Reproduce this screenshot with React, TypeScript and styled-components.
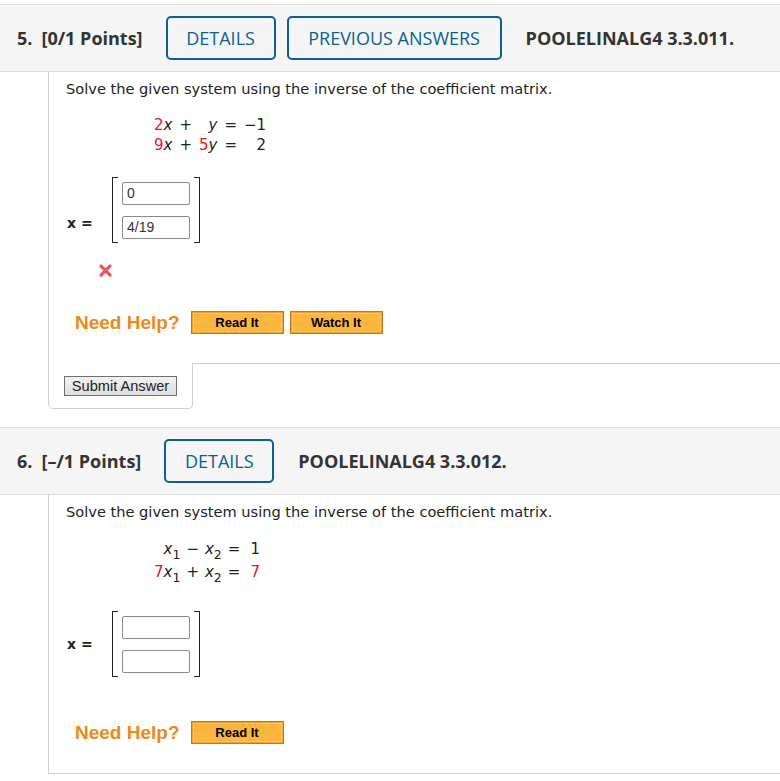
import React from "react";
import styled, { createGlobalStyle } from "styled-components";

const Global = createGlobalStyle`
  html, body { margin: 0; padding: 0; background: #fff; }
  body { padding-top: 4px; font-family: "DejaVu Sans", Verdana, sans-serif; }
`;

const Header = styled.div`
  display: flex;
  align-items: center;
  height: 66px;
  background: #f5f5f5;
  border-top: 1px solid #dcdcdc;
  border-bottom: 1px solid #dcdcdc;
  padding-left: 17px;
  font-family: "Open Sans", sans-serif;
  color: #333;
`;

const Points = styled.div`
  font-weight: 700;
  font-size: 18px;
  display: flex;
  gap: 9px;
  margin-right: 23px;
`;

const OutlineBtn = styled.div<{ $w: number }>`
  box-sizing: border-box;
  width: ${(p) => p.$w}px;
  height: 44px;
  border: 2px solid #0c5f96;
  border-radius: 5px;
  display: flex;
  align-items: center;
  justify-content: center;
  color: #0c5f96;
  font-size: 18px;
  margin-right: 11px;
`;

const Title = styled.div`
  font-weight: 700;
  font-size: 18px;
  margin-left: 13px;
`;

const Body = styled.div`
  margin-left: 48px;
  border-left: 1px solid #cfcfcf;
  padding: 8px 0 0 17px;
  color: #222;
  font-size: 14.6px;
`;

const Prompt = styled.div`
  line-height: 18px;
`;

const Eqs = styled.div<{ $lh: number; $top: number; $left: number; $gap: number }>`
  display: grid;
  grid-template-columns: auto auto auto auto auto;
  column-gap: ${(p) => p.$gap}px;
  justify-content: start;
  margin: ${(p) => p.$top}px 0 0 ${(p) => p.$left}px;
  line-height: ${(p) => p.$lh}px;
  font-size: 15px;
`;

const Cell = styled.span<{ $r?: boolean; $pad?: number }>`
  text-align: ${(p) => (p.$r ? "right" : "left")};
  white-space: nowrap;
  padding-left: ${(p) => p.$pad || 0}px;
`;

const Red = styled.span`
  color: #e8141e;
`;

const Var = styled.i`
  font-style: italic;
`;

const Sub = styled.sub`
  font-size: 12.5px;
  vertical-align: -5px;
  line-height: 0;
`;

const MatrixRow = styled.div<{ $top: number }>`
  display: flex;
  align-items: center;
  margin-top: ${(p) => p.$top}px;
`;

const XLabel = styled.span<{ $off: number }>`
  font-weight: 700;
  font-size: 14px;
  width: 45px;
  padding-left: 1px;
  position: relative;
  top: ${(p) => p.$off}px;
`;

const Bracket = styled.div`
  display: flex;
  flex-direction: column;
  gap: 11px;
  padding: 5px 9px 4px 9px;
  border-left: 1px solid #222;
  border-right: 1px solid #222;
  position: relative;
  &::before, &::after {
    content: "";
    position: absolute;
    top: 0;
    bottom: 0;
    width: 5px;
    border-top: 1px solid #222;
    border-bottom: 1px solid #222;
  }
  &::before { left: 0; }
  &::after { right: 0; }
`;

const Input = styled.div`
  box-sizing: border-box;
  width: 68px;
  height: 23px;
  border: 1px solid #8a8a8a;
  border-radius: 2px;
  font-family: "Liberation Sans", Arial, sans-serif;
  font-size: 14px;
  color: #333;
  padding: 2px 0 0 4px;
  background: #fff;
`;

const Wrong = styled.div`
  margin: 20px 0 0 32px;
  height: 16px;
`;

const HelpRow = styled.div<{ $top: number }>`
  display: flex;
  align-items: center;
  gap: 6px;
  margin: ${(p) => p.$top}px 0 0 9px;
`;

const NeedHelp = styled.span`
  font-family: "Liberation Sans", Arial, sans-serif;
  font-weight: 700;
  font-size: 19px;
  color: #ec8a16;
  margin-right: 5px;
`;

const HelpBtn = styled.div`
  box-sizing: border-box;
  width: 93px;
  height: 23px;
  background: #fbb63f;
  border: 1px solid #c9741d;
  box-shadow: inset 0 0 0 1px #f5a02a, inset 0 0 0 2px #fcc766;
  display: flex;
  align-items: center;
  justify-content: center;
  font-family: "Liberation Sans", Arial, sans-serif;
  font-weight: 700;
  font-size: 13px;
  color: #000;
`;

const Footer = styled.div`
  display: flex;
  margin-left: 48px;
`;

const SubmitTab = styled.div`
  box-sizing: border-box;
  width: 145px;
  height: 46px;
  border: 1px solid #cfcfcf;
  border-top: none;
  border-radius: 0 0 5px 5px;
  padding: 13px 0 0 15px;
`;

const FooterRest = styled.div`
  flex: 1;
  border-top: 1px solid #cfcfcf;
`;

const SubmitBtn = styled.div`
  box-sizing: border-box;
  display: inline-block;
  width: 113px;
  height: 20px;
  border: 1px solid #707070;
  background: linear-gradient(#f2f2f2, #dedede);
  font-family: "Liberation Sans", Arial, sans-serif;
  font-size: 14.6px;
  color: #222;
  text-align: center;
  line-height: 18px;
`;

const Body2 = styled(Body)`
  border-bottom: 1px solid #cfcfcf;
  padding-bottom: 29px;
`;

const Gap = styled.div`
  height: 18px;
`;

const Spacer = styled.div<{ $h: number }>`
  height: ${(p) => p.$h}px;
`;

function Mat({ vals, top, off }: { vals: string[]; top: number; off: number }) {
  return (
    <MatrixRow $top={top}>
      <XLabel $off={off}>x =</XLabel>
      <Bracket>
        {vals.map((v, i) => (
          <Input key={i}>{v}</Input>
        ))}
      </Bracket>
    </MatrixRow>
  );
}

const Cross = () => (
  <svg width="15" height="15" viewBox="0 0 15 15">
    <path d="M3 3 L12 12 M12 3 L3 12" stroke="#f0585e" strokeWidth="3.2" strokeLinecap="round" />
  </svg>
);

export default function App() {
  return (
    <>
      <Global />
      <Header>
        <Points>
          <span>5.</span>
          <span>[0/1 Points]</span>
        </Points>
        <OutlineBtn $w={110}>DETAILS</OutlineBtn>
        <OutlineBtn $w={215}>PREVIOUS ANSWERS</OutlineBtn>
        <Title>POOLELINALG4 3.3.011.</Title>
      </Header>
      <Body>
        <Prompt>Solve the given system using the inverse of the coefficient matrix.</Prompt>
        <Eqs $lh={20} $top={17} $left={88} $gap={7}>
          <Cell>
            <Red>2</Red>
            <Var>x</Var>
          </Cell>
          <Cell>+</Cell>
          <Cell $r>
            <Var>y</Var>
          </Cell>
          <Cell>=</Cell>
          <Cell $r>−1</Cell>
          <Cell>
            <Red>9</Red>
            <Var>x</Var>
          </Cell>
          <Cell>+</Cell>
          <Cell $r>
            <Red>5</Red>
            <Var>y</Var>
          </Cell>
          <Cell>=</Cell>
          <Cell $r>2</Cell>
        </Eqs>
        <Mat vals={["0", "4/19"]} top={22} off={13} />
        <Wrong>
          <Cross />
        </Wrong>
        <HelpRow $top={32}>
          <NeedHelp>Need Help?</NeedHelp>
          <HelpBtn>Read It</HelpBtn>
          <HelpBtn>Watch It</HelpBtn>
        </HelpRow>
        <Spacer $h={29} />
      </Body>
      <Footer>
        <SubmitTab>
          <SubmitBtn>Submit Answer</SubmitBtn>
        </SubmitTab>
        <FooterRest />
      </Footer>
      <Gap />
      <Header>
        <Points>
          <span>6.</span>
          <span>[–/1 Points]</span>
        </Points>
        <OutlineBtn $w={110}>DETAILS</OutlineBtn>
        <Title>POOLELINALG4 3.3.012.</Title>
      </Header>
      <Body2>
        <Prompt>Solve the given system using the inverse of the coefficient matrix.</Prompt>
        <Eqs $lh={23} $top={17} $left={88} $gap={6}>
          <Cell $r>
            <Var>x</Var>
            <Sub>1</Sub>
          </Cell>
          <Cell>−</Cell>
          <Cell>
            <Var>x</Var>
            <Sub>2</Sub>
          </Cell>
          <Cell>=</Cell>
          <Cell $r $pad={4}>1</Cell>
          <Cell $r>
            <Red>7</Red>
            <Var>x</Var>
            <Sub>1</Sub>
          </Cell>
          <Cell>+</Cell>
          <Cell>
            <Var>x</Var>
            <Sub>2</Sub>
          </Cell>
          <Cell>=</Cell>
          <Cell $r $pad={4}>
            <Red>7</Red>
          </Cell>
        </Eqs>
        <Mat vals={["", ""]} top={27} off={0} />
        <HelpRow $top={44}>
          <NeedHelp>Need Help?</NeedHelp>
          <HelpBtn>Read It</HelpBtn>
        </HelpRow>
      </Body2>
    </>
  );
}
